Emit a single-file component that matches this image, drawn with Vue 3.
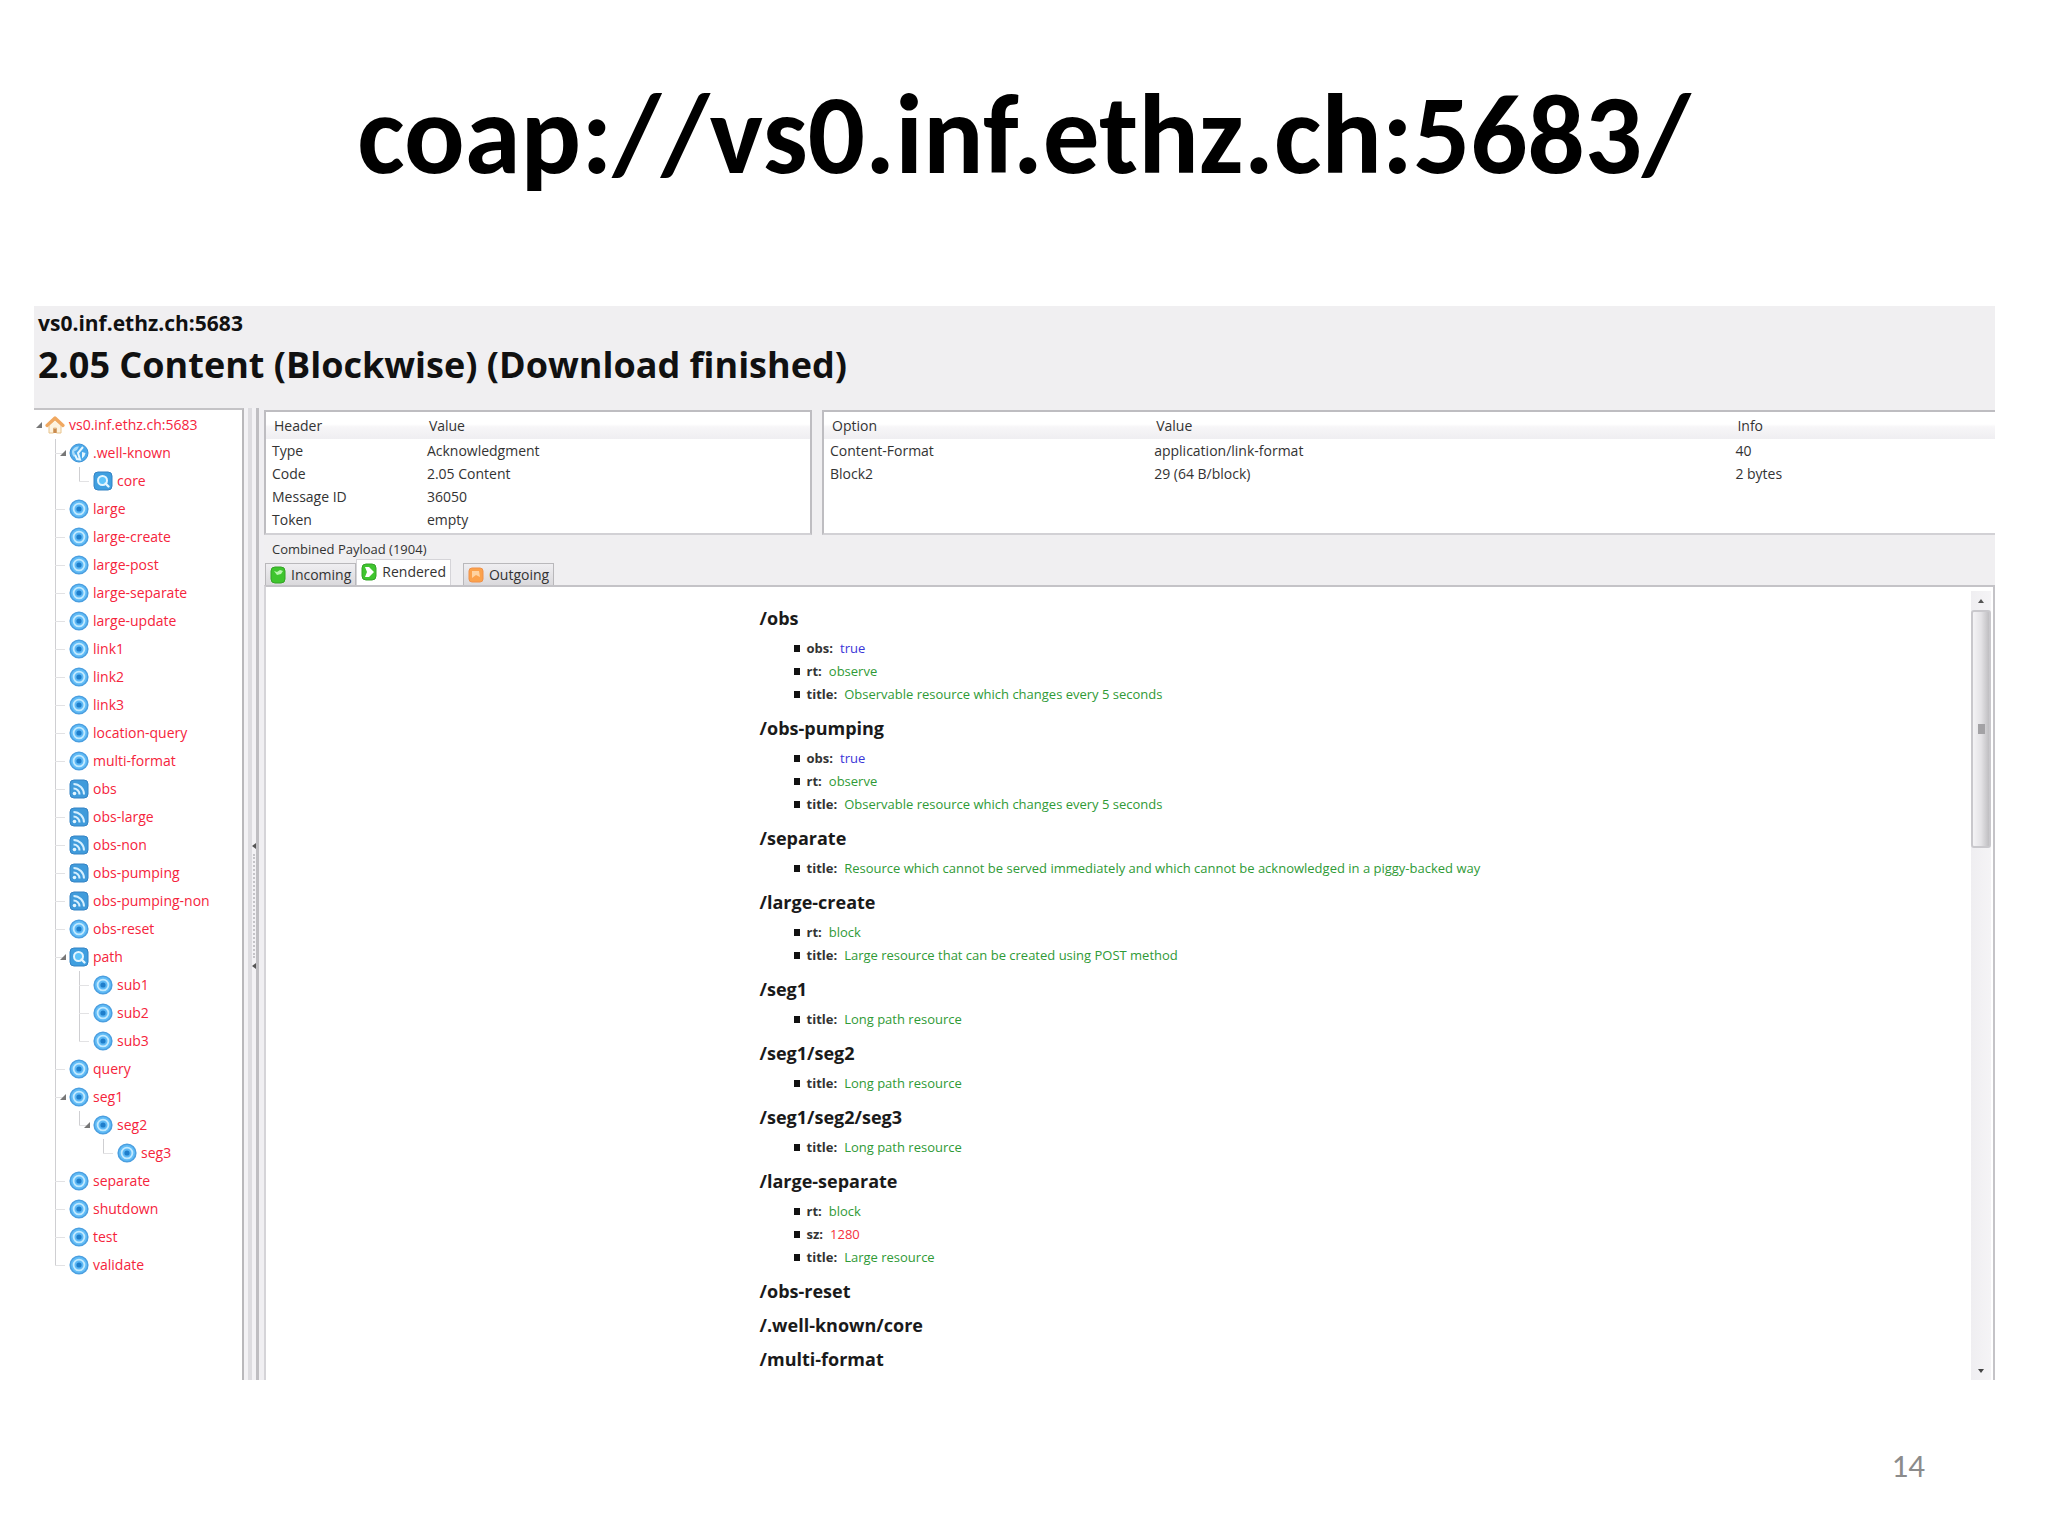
<script setup>
const entries = [
  ['vs0.inf.ethz.ch:5683', 0, 'home', true],
  ['.well-known', 1, 'globe', true],
  ['core', 2, 'search'],
  ['large', 1, 'dot'],
  ['large-create', 1, 'dot'],
  ['large-post', 1, 'dot'],
  ['large-separate', 1, 'dot'],
  ['large-update', 1, 'dot'],
  ['link1', 1, 'dot'],
  ['link2', 1, 'dot'],
  ['link3', 1, 'dot'],
  ['location-query', 1, 'dot'],
  ['multi-format', 1, 'dot'],
  ['obs', 1, 'feed'],
  ['obs-large', 1, 'feed'],
  ['obs-non', 1, 'feed'],
  ['obs-pumping', 1, 'feed'],
  ['obs-pumping-non', 1, 'feed'],
  ['obs-reset', 1, 'dot'],
  ['path', 1, 'search', true],
  ['sub1', 2, 'dot'],
  ['sub2', 2, 'dot'],
  ['sub3', 2, 'dot'],
  ['query', 1, 'dot'],
  ['seg1', 1, 'dot', true],
  ['seg2', 2, 'dot', true],
  ['seg3', 3, 'dot'],
  ['separate', 1, 'dot'],
  ['shutdown', 1, 'dot'],
  ['test', 1, 'dot'],
  ['validate', 1, 'dot'],
]

// A guide continues below a row while another entry of that depth follows in the same branch.
function continues(index, depth) {
  for (let i = index + 1; i < entries.length; i++) {
    if (entries[i][1] < depth) return false
    if (entries[i][1] === depth) return true
  }
  return false
}

const tree = entries.map(([label, depth, icon, open], index) => {
  const guides = []
  for (let d = 1; d <= depth; d++) {
    const more = continues(index, d)
    if (d === depth) guides.push(more ? 'tee' : 'elbow')
    else guides.push(more ? 'line' : 'blank')
  }
  return { label, depth, icon, open, guides }
})

const headers = [
  ['Type', 'Acknowledgment'],
  ['Code', '2.05 Content'],
  ['Message ID', '36050'],
  ['Token', 'empty'],
]

const options = [
  ['Content-Format', 'application/link-format', '40'],
  ['Block2', '29 (64 B/block)', '2 bytes'],
]

const tabs = [
  { label: 'Incoming', tone: 'green' },
  { label: 'Rendered', tone: 'green', active: true },
  { label: 'Outgoing', tone: 'orange' },
]

const observable = [
  ['obs', 'true', 'bool'],
  ['rt', 'observe'],
  ['title', 'Observable resource which changes every 5 seconds'],
]

const resources = [
  { path: '/obs', attrs: observable },
  { path: '/obs-pumping', attrs: observable },
  {
    path: '/separate',
    attrs: [['title', 'Resource which cannot be served immediately and which cannot be acknowledged in a piggy-backed way']],
  },
  {
    path: '/large-create',
    attrs: [['rt', 'block'], ['title', 'Large resource that can be created using POST method']],
  },
  { path: '/seg1', attrs: [['title', 'Long path resource']] },
  { path: '/seg1/seg2', attrs: [['title', 'Long path resource']] },
  { path: '/seg1/seg2/seg3', attrs: [['title', 'Long path resource']] },
  { path: '/large-separate', attrs: [['rt', 'block'], ['sz', '1280', 'num'], ['title', 'Large resource']] },
  { path: '/obs-reset', attrs: [] },
  { path: '/.well-known/core', attrs: [] },
  { path: '/multi-format', attrs: [] },
]
</script>

<template>
  <div class="slide">
    <h1 class="slide-title">coap://vs0.inf.ethz.ch:5683/</h1>

    <main class="app">
      <header class="status">
        <p class="host">vs0.inf.ethz.ch:5683</p>
        <h2 class="result">2.05 Content (Blockwise) (Download finished)</h2>
      </header>

      <div class="body">
        <nav class="tree-pane" aria-label="Resources">
          <ul class="tree" role="tree">
            <li v-for="node in tree" :key="node.label" class="node" role="treeitem" :aria-level="node.depth + 1">
              <span class="gutter"></span>
              <span v-for="(g, i) in node.guides" :key="i" class="guide" :class="g"></span>
              <svg v-if="node.open" class="twist" viewBox="0 0 8 8"><path d="M7 1v6H1z" fill="#777" /></svg>
              <svg class="icon" viewBox="0 0 20 20" aria-hidden="true">
                <g v-if="node.icon === 'home'">
                  <path d="M4 10v8h4.500v-5h3v5H16v-8l-6-5z" fill="#fdf3df" stroke="#e8c38c" />
                  <path d="M2 10.500 10 3l8 7.500" fill="none" stroke="#f0a860" stroke-width="3.200" stroke-linejoin="round" stroke-linecap="round" />
                  <path d="M8.500 18v-4.500h3V18z" fill="#c98a50" />
                </g>
                <g v-else-if="node.icon === 'globe'">
                  <circle cx="10" cy="10" r="9" fill="#4ba9ea" stroke="#3c92d6" />
                  <path d="M3 8c1-3 4-5 7-4.500L8 7l-3 1.500L6.500 12 5 14C3.500 12.500 2.700 10 3 8z" fill="#a9dcfa" />
                  <path d="M14 4l-5 6 2 6.500L8 16l-2-4" fill="none" stroke="#e6f7ff" stroke-width="2" />
                  <path d="M13 9l3.500 1-1 3-2.500 2.500z" fill="#e6f7ff" />
                </g>
                <g v-else-if="node.icon === 'search'">
                  <rect x="1" y="1" width="18" height="18" rx="4" fill="#3f9fe0" stroke="#3583c4" />
                  <circle cx="9.500" cy="9.500" r="4.500" fill="#5fc4fa" stroke="#e4f6ff" stroke-width="2" />
                  <path d="M12.500 12.500l3 3" stroke="#e4f6ff" stroke-width="2.400" stroke-linecap="round" />
                </g>
                <g v-else-if="node.icon === 'feed'">
                  <rect x="1" y="1" width="18" height="18" rx="4" fill="#409bdb" stroke="#3583c4" />
                  <circle cx="5.500" cy="14.500" r="1.800" fill="#e4f6ff" />
                  <path d="M4.500 9.500a6 6 0 0 1 6 6M4.500 5a10.500 10.500 0 0 1 10.500 10.500" fill="none" stroke="#d6f0ff" stroke-width="2" />
                </g>
                <g v-else>
                  <circle cx="10" cy="10" r="8.800" fill="#62bdf7" stroke="#4b9fe0" stroke-width="1.600" />
                  <circle cx="10" cy="10" r="5.400" fill="#5cb8f5" stroke="#c2eaff" stroke-width="1.800" />
                  <circle cx="10" cy="10" r="2.600" fill="#1f7ecb" />
                </g>
              </svg>
              <span class="node-label">{{ node.label }}</span>
            </li>
          </ul>
        </nav>

        <div class="splitter" role="separator" aria-orientation="vertical">
          <div class="grip">
            <svg viewBox="0 0 6 8"><path d="M5 1v6L1 4z" fill="#555" /></svg>
            <span class="dots"></span>
            <svg viewBox="0 0 6 8"><path d="M5 1v6L1 4z" fill="#555" /></svg>
          </div>
        </div>

        <section class="detail">
          <div class="tables">
            <div class="table-box">
              <table class="headers">
                <thead>
                  <tr><th>Header</th><th>Value</th></tr>
                </thead>
                <tbody>
                  <tr v-for="row in headers" :key="row[0]"><td v-for="cell in row" :key="cell">{{ cell }}</td></tr>
                </tbody>
              </table>
            </div>
            <div class="table-box open-end">
              <table class="options">
                <thead>
                  <tr><th>Option</th><th>Value</th><th>Info</th></tr>
                </thead>
                <tbody>
                  <tr v-for="row in options" :key="row[0]"><td v-for="cell in row" :key="cell">{{ cell }}</td></tr>
                </tbody>
              </table>
            </div>
          </div>

          <p class="payload">Combined Payload (1904)</p>
          <div class="tabs" role="tablist">
            <button
              v-for="tab in tabs"
              :key="tab.label"
              type="button"
              role="tab"
              class="tab"
              :class="[tab.tone, { active: tab.active }]"
              :aria-selected="!!tab.active"
            >
              <svg class="tab-icon" viewBox="0 0 16 18" aria-hidden="true">
                <template v-if="tab.tone === 'green'">
                  <rect x="1" y="1" width="14" height="16" rx="4" fill="#3fc52e" stroke="#35a327" />
                  <path v-if="tab.active" d="M4 4h4l5 5-5 5H4l2-5z" fill="#fff" />
                  <path v-else d="M4 5l3 1 3-2 3 1-2 3-4 1z" fill="#b9f5ae" />
                </template>
                <template v-else>
                  <rect x="1" y="2" width="14" height="14" rx="3" fill="#fba24c" stroke="#f0914a" />
                  <path d="M4 5h7l1 6-4-2-4 3z" fill="#ffd3a0" />
                </template>
              </svg>
              {{ tab.label }}
            </button>
          </div>

          <div class="viewer">
            <article class="doc">
              <section v-for="res in resources" :key="res.path">
                <h3 class="path">{{ res.path }}</h3>
                <ul v-if="res.attrs.length" class="attrs">
                  <li v-for="[key, value, kind] in res.attrs" :key="key">
                    <b>{{ key }}:</b><span :class="kind || 'str'">{{ value }}</span>
                  </li>
                </ul>
              </section>
            </article>
            <div class="scrollbar">
              <button type="button" class="step" aria-label="Scroll up"><svg viewBox="0 0 8 6"><path d="M1 5h6L4 1z" fill="#555" /></svg></button>
              <div class="thumb"><span></span></div>
              <button type="button" class="step end" aria-label="Scroll down"><svg viewBox="0 0 8 6"><path d="M1 1h6L4 5z" fill="#444" /></svg></button>
            </div>
          </div>
        </section>
      </div>
    </main>

    <footer class="page-number">14</footer>
  </div>
</template>

<style>
body {
  background: #fff;
}
</style>

<style scoped>
.slide {
  box-sizing: border-box;
  min-height: 100vh;
  padding: 64px 53px 0 34px;
  font-family: "Open Sans", "Noto Sans", sans-serif;
  font-size: 14px;
  color: #333;
}
h1, h2, h3, p, ul {
  margin: 0;
  padding: 0;
}
ul {
  list-style: none;
}
.slide-title {
  height: 242px;
  padding-left: 19px;
  font: bold 113px/140px Carlito, Lato, sans-serif;
  color: #000;
  text-align: center;
}

/* Application window */
.app {
  background: #f0eff1;
}
.status {
  box-sizing: border-box;
  height: 102px;
  padding: 1px 0 0 4px;
  color: #111;
}
.host {
  font-size: 21px;
  font-weight: 700;
  line-height: 32px;
}
.result {
  font-size: 36px;
  line-height: 52px;
}
.body {
  display: flex;
}

/* Resource tree */
.tree-pane {
  flex: 0 0 208px;
  border-top: 2px solid #c4c3c6;
  border-right: 2px solid #b9b8bb;
  background: #fff;
}
.tree {
  padding-top: 1px;
}
.node {
  display: flex;
  align-items: center;
  height: 28px;
  line-height: 28px;
  color: #f5243c;
}
.gutter {
  flex: 0 0 11px;
}
.guide {
  position: relative;
  flex: 0 0 24px;
  height: 28px;
}
.line::before,
.tee::before,
.elbow::before {
  content: "";
  position: absolute;
  left: 10px;
  top: 0;
  height: 28px;
  border-left: 1px solid #cfcfd2;
}
.elbow::before {
  height: 14px;
}
.tee::after,
.elbow::after {
  content: "";
  position: absolute;
  left: 10px;
  top: 14px;
  width: 10px;
  border-top: 1px solid #e2e2e4;
}
.twist {
  flex: 0 0 8px;
  width: 8px;
  height: 8px;
  margin-left: -10px;
  margin-right: 2px;
  z-index: 1;
}
.icon {
  flex: 0 0 20px;
  width: 20px;
  height: 20px;
}
.node-label {
  padding-left: 4px;
  white-space: nowrap;
}

/* Splitter */
.splitter {
  flex: 0 0 20px;
  display: flex;
  align-items: center;
  justify-content: center;
  background: linear-gradient(to right, #f3f2f5 4px, #dddce0 4px, #dddce0 8px, #f3f2f5 8px, #f3f2f5 12px, #bfbec2 12px, #bfbec2 15px, #f0eff2 15px);
}
.grip {
  display: flex;
  flex-direction: column;
  align-items: center;
  gap: 4px;
  padding-top: 24px;
}
.grip svg {
  width: 6px;
  height: 8px;
}
.dots {
  height: 104px;
  border-left: 2px dotted #c5c4c8;
}

/* Tables */
.detail {
  flex: 1;
  min-width: 0;
  display: flex;
  flex-direction: column;
}
.tables {
  display: grid;
  grid-template-columns: 548fr 1173fr;
  gap: 10px;
  padding-top: 2px;
}
.table-box {
  box-sizing: border-box;
  height: 125px;
  border: 2px solid #bebdc1;
  border-bottom-color: #d2d1d5;
  background: #fff;
}
.open-end {
  border-right: 0;
}
table {
  width: 100%;
  table-layout: fixed;
  border-collapse: collapse;
}
th, td {
  padding: 0 0 0 6px;
  text-align: left;
  font-weight: 400;
  white-space: nowrap;
}
th {
  height: 27px;
  padding-left: 8px;
  background: linear-gradient(#fff 45%, #f7f6f8 55%, #efeef1);
}
td {
  height: 23px;
}
.headers th:first-child {
  width: 27%;
}
.options th:first-child {
  width: 27%;
}
.options th:last-child {
  width: 22%;
}

/* Payload tabs */
.payload {
  padding: 4px 0 0 8px;
  font-size: 13px;
  line-height: 20px;
}
.tabs {
  display: flex;
  align-items: flex-end;
  height: 26px;
  padding-left: 1px;
}
.tab {
  display: flex;
  align-items: center;
  gap: 5px;
  height: 22px;
  padding: 0 4px;
  border: 1px solid #b9b8bb;
  border-bottom: 0;
  background: linear-gradient(#efeef1, #dad9dc);
  font: inherit;
  color: #333;
}
.tab.active {
  height: 26px;
  padding-bottom: 2px;
  border-color: #d5d4d8;
  background: #fff;
}
.tab.orange {
  margin-left: 12px;
}
.tab-icon {
  width: 16px;
  height: 18px;
}

/* Rendered payload */
.viewer {
  display: flex;
  border: 2px solid #c4c3c7;
  border-left-color: #d5d4d8;
  border-bottom: 0;
  background: #fff;
}
.doc {
  flex: 1;
  padding: 14px 0 4px calc(28% + 10px);
}
.path {
  font-size: 18px;
  line-height: 34px;
  color: #1a1a1a;
}
.attrs {
  margin: 2px 0 5px;
  padding-left: 34px;
  font-size: 13px;
}
.attrs li {
  display: flex;
  align-items: center;
  line-height: 23px;
  white-space: nowrap;
}
.attrs li::before {
  content: "";
  width: 6px;
  height: 7px;
  margin-right: 7px;
  background: #111;
}
.attrs b {
  margin-right: 7px;
}
.str {
  color: #2f9a36;
}
.bool {
  color: #3a35d8;
}
.num {
  color: #f5303c;
}
.scrollbar {
  flex: 0 0 20px;
  display: flex;
  flex-direction: column;
  margin: 4px 2px 0 0;
  background: linear-gradient(to right, #efeef1, #f5f4f6);
}
.step {
  display: flex;
  justify-content: center;
  align-items: center;
  height: 19px;
  padding: 0;
  border: 0;
  background: none;
}
.step svg {
  width: 8px;
  height: 6px;
}
.step.end {
  margin-top: auto;
}
.thumb {
  box-sizing: border-box;
  display: flex;
  align-items: center;
  justify-content: center;
  height: 238px;
  border: 2px solid #c9c8cc;
  border-radius: 3px;
  background: linear-gradient(to right, #f4f3f5, #e4e3e6 50%, #bfbec1);
}
.thumb span {
  width: 7px;
  height: 10px;
  background: #a3a2a5;
}
.page-number {
  padding: 66px 70px 0 0;
  font: 33px/40px Carlito, Lato, sans-serif;
  color: #8b8b8b;
  text-align: right;
}
</style>
